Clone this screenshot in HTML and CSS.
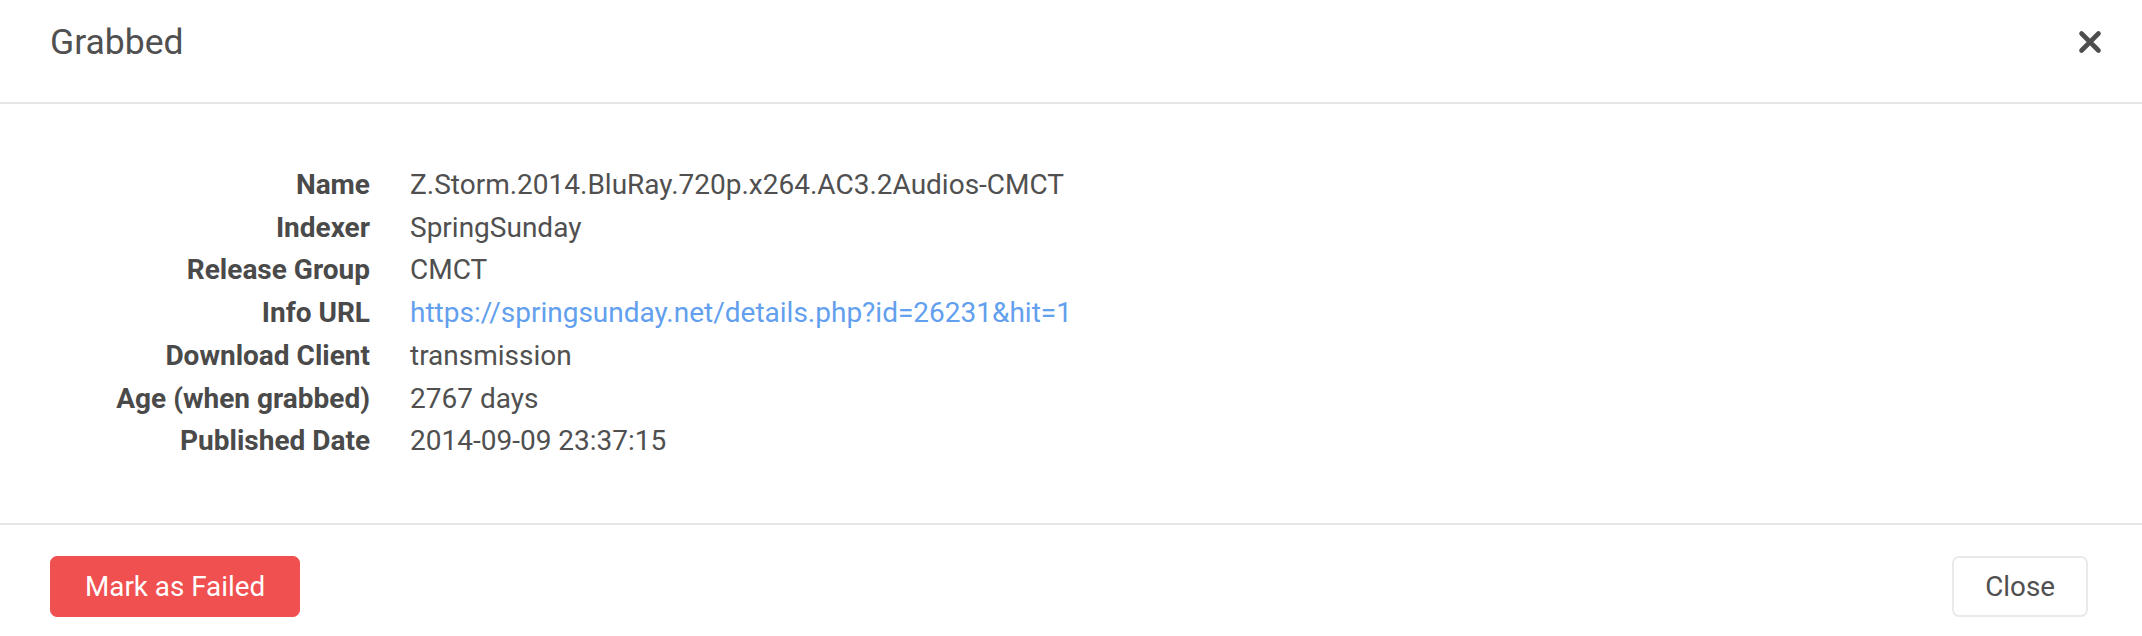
FILE: index.html
```html
<!DOCTYPE html>
<html lang="en">
<head>
<meta charset="utf-8">
<title>Grabbed</title>
<link rel="stylesheet" href="styles.css">
</head>
<body>
<div class="modal">
  <header class="modal-header">
    <h1 class="title">Grabbed</h1>
    <button class="close-x" aria-label="Close">
      <svg viewBox="0 0 24 24" width="24" height="24"><path d="M3.5 3.5 L20.5 20.5 M20.5 3.5 L3.5 20.5" stroke="#4d4d4d" stroke-width="4.6" stroke-linecap="round" fill="none"/></svg>
    </button>
  </header>
  <div class="modal-body">
    <dl class="details">
      <dt>Name</dt><dd>Z.Storm.2014.BluRay.720p.x264.AC3.2Audios-CMCT</dd>
      <dt>Indexer</dt><dd>SpringSunday</dd>
      <dt>Release Group</dt><dd>CMCT</dd>
      <dt>Info URL</dt><dd><a class="link" href="#">https://springsunday.net/details.php?id=26231&amp;hit=1</a></dd>
      <dt>Download Client</dt><dd>transmission</dd>
      <dt>Age (when grabbed)</dt><dd>2767 days</dd>
      <dt>Published Date</dt><dd>2014-09-09 23:37:15</dd>
    </dl>
  </div>
  <footer class="modal-footer">
    <button class="btn btn-danger">Mark as Failed</button>
    <button class="btn btn-default">Close</button>
  </footer>
</div>
</body>
</html>
```
FILE: styles.css
```css
html, body {
  margin: 0;
  padding: 0;
  background: #fff;
}
body {
  font-family: Roboto, "Liberation Sans", Arial, sans-serif;
  color: #505050;
  width: 2142px;
  height: 636px;
  overflow: hidden;
}
.modal {
  display: flex;
  flex-direction: column;
}
.modal-header {
  box-sizing: border-box;
  height: 104px;
  padding: 17px 40px 0 50px;
  border-bottom: 2px solid #e6e6e6;
  display: flex;
  align-items: flex-start;
  justify-content: space-between;
}
.title {
  margin: 0;
  font-size: 35.5px;
  line-height: 50px;
  font-weight: 400;
  color: #505050;
}
.close-x {
  height: 50px;
  padding: 0;
  border: 0;
  background: transparent;
  display: flex;
  align-items: center;
  cursor: pointer;
}
.close-x svg {
  display: block;
}
.modal-body {
  padding: 60px 0 60px 0;
  border-bottom: 2px solid #e6e6e6;
}
.details {
  margin: 0;
  display: grid;
  grid-template-columns: 370px 1fr;
  column-gap: 40px;
  font-size: 28px;
  line-height: 42.7px;
}
.details dt {
  text-align: right;
  font-weight: 700;
  color: #4a4a4a;
}
.details dd {
  margin: 0;
  color: #505050;
}
.link {
  color: #629fee;
  text-decoration: none;
}
.modal-footer {
  padding: 31px 54px 0 50px;
  display: flex;
  justify-content: space-between;
  align-items: flex-start;
}
.btn {
  font-family: Roboto, "Liberation Sans", Arial, sans-serif;
  font-size: 27.8px;
  line-height: 39px;
  padding: 10px 34px;
  border-radius: 7px;
  cursor: pointer;
}
.btn-danger {
  background: #f05050;
  border: 1px solid #f05050;
  color: #fff;
}
.btn-default {
  background: #fff;
  border: 2px solid #eaeaea;
  color: #505050;
  padding: 9px 31px;
}
```
